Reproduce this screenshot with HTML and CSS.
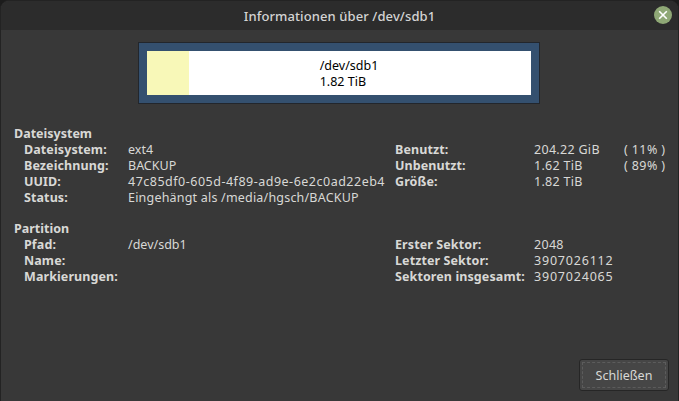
FILE: index.html
```html
<!DOCTYPE html>
<html>
  <head>
    <title>Informationen über /dev/sdb1</title>
    <link rel="stylesheet" href="styles.css">
  </head>
  <body>
    <div class="window">
      <div class="titlebar">
        <span class="title">Informationen über /dev/sdb1</span>
        <span class="close">
          <svg width="10" height="10" viewBox="0 0 10 10">
            <path d="M1.2 1.2L8.8 8.8M8.8 1.2L1.2 8.8" stroke="#fff" stroke-width="1.6" fill="none" />
          </svg>
        </span>
      </div>

      <div class="content">
        <div class="partition-map">
          <div class="partition-box">
            <div class="used"></div>
            <div class="partition-text">
              <div class="partition-lines">
                <div>/dev/sdb1</div>
                <div>1.82 TiB</div>
              </div>
            </div>
          </div>
        </div>

        <div class="info">
          <div class="section-left">
            <div class="heading">Dateisystem</div>
            <div class="row"><span class="label">Dateisystem:</span><span>ext4</span></div>
            <div class="row"><span class="label">Bezeichnung:</span><span>BACKUP</span></div>
            <div class="row"><span class="label">UUID:</span><span class="uuid">47c85df0-605d-4f89-ad9e-6e2c0ad22eb4</span></div>
            <div class="row"><span class="label">Status:</span><span class="status">Eingehängt als /media/hgsch/BACKUP</span></div>
          </div>
          <div class="section-right">
            <div class="heading">&nbsp;</div>
            <div class="row"><span class="label">Benutzt:</span><span class="amount">204.22 GiB</span><span class="percent">( 11% )</span></div>
            <div class="row"><span class="label">Unbenutzt:</span><span class="amount">1.62 TiB</span><span class="percent">( 89% )</span></div>
            <div class="row"><span class="label">Größe:</span><span class="amount">1.82 TiB</span></div>
          </div>
          <div class="section-left">
            <div class="heading">Partition</div>
            <div class="row"><span class="label">Pfad:</span><span>/dev/sdb1</span></div>
            <div class="row"><span class="label">Name:</span></div>
            <div class="row"><span class="label">Markierungen:</span></div>
          </div>
          <div class="section-right">
            <div class="heading">&nbsp;</div>
            <div class="row"><span class="label">Erster Sektor:</span><span class="amount">2048</span></div>
            <div class="row"><span class="label">Letzter Sektor:</span><span class="amount sector">3907026112</span></div>
            <div class="row"><span class="label">Sektoren insgesamt:</span><span class="amount sector">3907024065</span></div>
          </div>
        </div>

        <div class="actions">
          <button class="close-button"><span>Schließen</span></button>
        </div>
      </div>
    </div>
  </body>
</html>
```
FILE: styles.css
```css
html,
body {
  margin: 0;
  height: 100%;
  background-color: #1c1c1c;
}

body {
  font-family: "Noto Sans", sans-serif;
  font-size: 12.5px;
  color: #d8d8d6;
  overflow: hidden;
}

.window {
  width: 679px;
  height: 401px;
  display: flex;
  flex-direction: column;
  box-sizing: border-box;
  border: 1px solid #232323;
  border-bottom: none;
  border-radius: 9px 9px 0 0;
  overflow: hidden;
  background-color: #383838;
}

.titlebar {
  height: 29px;
  flex: none;
  display: flex;
  align-items: center;
  justify-content: center;
  position: relative;
  background-color: #2c2c2c;
}

.title {
  font-weight: 500;
  font-size: 13px;
  letter-spacing: 0.1px;
  color: #d4d4d4;
}

.close {
  position: absolute;
  top: 5px;
  right: 6px;
  width: 18px;
  height: 18px;
  border-radius: 50%;
  background-color: #8fa876;
  display: flex;
  align-items: center;
  justify-content: center;
}

.content {
  flex: 1;
  display: flex;
  flex-direction: column;
  padding: 12px 9px 10px 13px;
}

.partition-map {
  align-self: flex-start;
  width: 402px;
  height: 62px;
  box-sizing: border-box;
  border: 1px solid #22262c;
  background-color: #34506f;
  padding: 8px;
  margin-left: 124px;
}

.partition-box {
  height: 44px;
  display: flex;
  background-color: #fff;
  color: #000;
}

.used {
  width: 42px;
  background-color: #f8f8b8;
}

.partition-text {
  flex: 1;
  display: flex;
  justify-content: center;
  line-height: 16px;
  padding: 7px 22px 0 0;
}

.info {
  margin-top: 22px;
  display: grid;
  grid-template-columns: 381px 1fr;
  row-gap: 15px;
  line-height: 16px;
}

.heading {
  font-weight: 700;
}

.row {
  display: flex;
  padding-left: 10px;
}

.section-left .label {
  width: 104px;
  flex: none;
}

.section-right .heading {
  visibility: hidden;
}

.section-right .row {
  padding-left: 0;
}

.section-right .label {
  width: 139px;
  flex: none;
}

.amount {
  width: 90px;
  flex: none;
  letter-spacing: 0.3px;
}

.sector {
  letter-spacing: 0.8px;
}

.percent {
  letter-spacing: 0.4px;
}

.uuid {
  letter-spacing: 0.5px;
}

.status {
  letter-spacing: 0.2px;
}

.label {
  font-weight: 700;
  letter-spacing: 0.1px;
}

.actions {
  margin-top: auto;
  display: flex;
  justify-content: flex-end;
}

.close-button {
  width: 90px;
  height: 32px;
  padding: 2px;
  border: 1px solid #262626;
  border-radius: 3px;
  background-color: #464646;
  font-family: inherit;
  font-size: 12.5px;
  color: #d8d8d6;
}

.close-button span {
  display: flex;
  height: 100%;
  align-items: center;
  justify-content: center;
  border: 1px dashed #5c5c5c;
  box-sizing: border-box;
}
```
